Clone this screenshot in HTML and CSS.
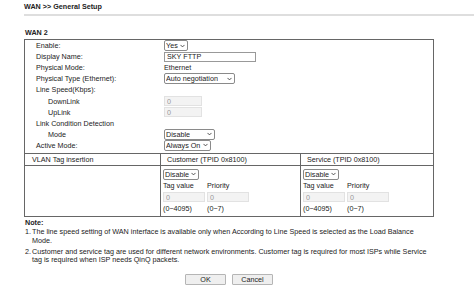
FILE: index.html
```html
<!DOCTYPE html>
<html lang="en">
<head>
    <meta charset="utf-8">
    <title>WAN General Setup</title>
    <link rel="stylesheet" href="styles.css">
</head>
<body>
    <div class="page">
        <h1 class="title">WAN &gt;&gt; General Setup</h1>
        <div class="rule"></div>

        <h2 class="section">WAN 2</h2>

        <div class="box">
            <div class="form">
                <div class="lbl">Enable:</div>
                <div class="val">
                    <span class="sel"><select><option>Yes</option></select><svg class="chev" viewBox="0 0 6 4"><path d="M0.6 0.7 L3 3.1 L5.4 0.7"/></svg></span>
                </div>

                <div class="lbl">Display Name:</div>
                <div class="val"><input class="txt name" type="text" value="SKY FTTP"></div>

                <div class="lbl">Physical Mode:</div>
                <div class="val">Ethernet</div>

                <div class="lbl">Physical Type (Ethernet):</div>
                <div class="val">
                    <span class="sel w-auto"><select><option>Auto negotiation</option></select><svg class="chev" viewBox="0 0 6 4"><path d="M0.6 0.7 L3 3.1 L5.4 0.7"/></svg></span>
                </div>

                <div class="lbl">Line Speed(Kbps):</div>
                <div class="val"></div>

                <div class="lbl sub">DownLink</div>
                <div class="val"><input class="txt off speed" type="text" value="0" disabled></div>

                <div class="lbl sub">UpLink</div>
                <div class="val"><input class="txt off speed" type="text" value="0" disabled></div>

                <div class="lbl">Link Condition Detection</div>
                <div class="val"></div>

                <div class="lbl sub">Mode</div>
                <div class="val">
                    <span class="sel w-mode"><select><option>Disable</option></select><svg class="chev" viewBox="0 0 6 4"><path d="M0.6 0.7 L3 3.1 L5.4 0.7"/></svg></span>
                </div>

                <div class="lbl">Active Mode:</div>
                <div class="val">
                    <span class="sel"><select><option>Always On</option></select><svg class="chev" viewBox="0 0 6 4"><path d="M0.6 0.7 L3 3.1 L5.4 0.7"/></svg></span>
                </div>
            </div>

            <div class="vlan">
                <div class="head first">VLAN Tag insertion</div>
                <div class="head">Customer (TPID 0x8100)</div>
                <div class="head">Service (TPID 0x8100)</div>

                <div class="cell first"></div>
                <div class="cell">
                    <span class="sel"><select><option>Disable</option></select><svg class="chev" viewBox="0 0 6 4"><path d="M0.6 0.7 L3 3.1 L5.4 0.7"/></svg></span>
                    <div class="tag">
                        <span>Tag value</span><span>Priority</span>
                        <input class="txt off" type="text" value="0" disabled><input class="txt off" type="text" value="0" disabled>
                        <span>(0~4095)</span><span>(0~7)</span>
                    </div>
                </div>
                <div class="cell">
                    <span class="sel"><select><option>Disable</option></select><svg class="chev" viewBox="0 0 6 4"><path d="M0.6 0.7 L3 3.1 L5.4 0.7"/></svg></span>
                    <div class="tag">
                        <span>Tag value</span><span>Priority</span>
                        <input class="txt off" type="text" value="0" disabled><input class="txt off" type="text" value="0" disabled>
                        <span>(0~4095)</span><span>(0~7)</span>
                    </div>
                </div>
            </div>
        </div>

        <div class="note">
            <div class="note-title">Note:</div>
            <ol class="note-list">
                <li><span class="num">1.</span><span>The line speed setting of WAN interface is available only when According to Line Speed is selected as the Load Balance Mode.</span></li>
                <li><span class="num">2.</span><span>Customer and service tag are used for different network environments. Customer tag is required for most ISPs while Service tag is required when ISP needs QinQ packets.</span></li>
            </ol>
        </div>

        <div class="actions">
            <button class="btn">OK</button>
            <button class="btn">Cancel</button>
        </div>
    </div>
</body>
</html>
```

FILE: styles.css
```css
body {
    margin: 0;
    font-family: "Liberation Sans", Arial, sans-serif;
    font-size: 7.2px;
    color: #222;
    background: #fff;
}

.page {
    width: 410px;
    padding: 2px 0 0 24px;
}

.title {
    font-size: 7.2px;
    font-weight: bold;
    margin: 0;
    line-height: 10px;
}

.rule {
    height: 2px;
    background: #dedede;
    margin: 2px 0 0 0;
    width: 450px;
}

.section {
    font-size: 7.2px;
    font-weight: bold;
    margin: 12px 0 0 1px;
    line-height: 10px;
}

/* main bordered panel */
.box {
    border: 1px solid #666;
    margin-top: 1px;
}

.form {
    display: grid;
    grid-template-columns: 128px 1fr;
    grid-auto-rows: 11.1px;
    padding: 0 0 2px 11px;
}

.lbl, .val {
    display: flex;
    align-items: center;
}

.lbl.sub {
    padding-left: 12px;
}

/* select look-alike */
.sel {
    display: inline-flex;
    align-items: center;
    height: 9px;
    border: 1px solid #8a8a8a;
    border-radius: 2px;
    background: #fff;
    padding: 0 2px 0 1px;
    box-sizing: content-box;
}

.sel select {
    appearance: none;
    -webkit-appearance: none;
    border: none;
    background: transparent;
    font: inherit;
    color: #222;
    padding: 0;
    margin: 0;
    height: 9px;
    line-height: 9px;
    outline: none;
}

.sel .chev {
    width: 5px;
    height: 4px;
    margin-left: 2px;
    fill: none;
    stroke: #333;
    stroke-width: 1;
}

.w-auto {
    width: 66px;
    justify-content: space-between;
}

.w-mode {
    width: 46px;
    justify-content: space-between;
}

.txt {
    font: inherit;
    color: #222;
    height: 10px;
    box-sizing: border-box;
    border: 1px solid #999;
    padding: 0 2px;
    margin: 0;
    background: #fff;
}

.txt.name {
    width: 92px;
}

.txt.off {
    background: #f3f3f3;
    border-color: #e2e2e2;
    color: #999;
    width: 42px;
}

.txt.speed {
    width: 38px;
}

/* VLAN grid */
.vlan {
    display: grid;
    grid-template-columns: 135px 140px 1fr;
}

.head {
    border-top: 1px solid #666;
    border-bottom: 1px solid #666;
    border-left: 1px solid #666;
    height: 11px;
    line-height: 11px;
    padding-left: 6px;
}

.head.first,
.cell.first {
    border-left: none;
}

.head.first {
    padding-left: 7px;
}

.cell {
    border-left: 1px solid #666;
    padding: 3px 2px 0 2px;
    height: 47px;
}

.tag {
    display: grid;
    grid-template-columns: 44px 44px;
    grid-template-rows: 12px 11px 12px;
    align-items: center;
}

/* notes */
.note {
    margin-top: 1px;
    width: 409px;
}

.note-title {
    font-weight: bold;
    margin-left: 1px;
    line-height: 9px;
}

.note-list {
    list-style: none;
    margin: 1.5px 0 0 0;
    padding: 0;
}

.note-list li {
    display: flex;
    line-height: 8.8px;
    margin-bottom: 1.5px;
}

.num {
    flex: none;
    width: 7px;
    margin-left: 1px;
}

/* buttons */
.actions {
    display: flex;
    justify-content: center;
    gap: 6px;
    margin-top: 9px;
}

.btn {
    font: inherit;
    color: #222;
    width: 41px;
    height: 11px;
    padding: 0;
    border: 1px solid #b5b5b5;
    background: #efefef;
    border-radius: 1px;
}
```
